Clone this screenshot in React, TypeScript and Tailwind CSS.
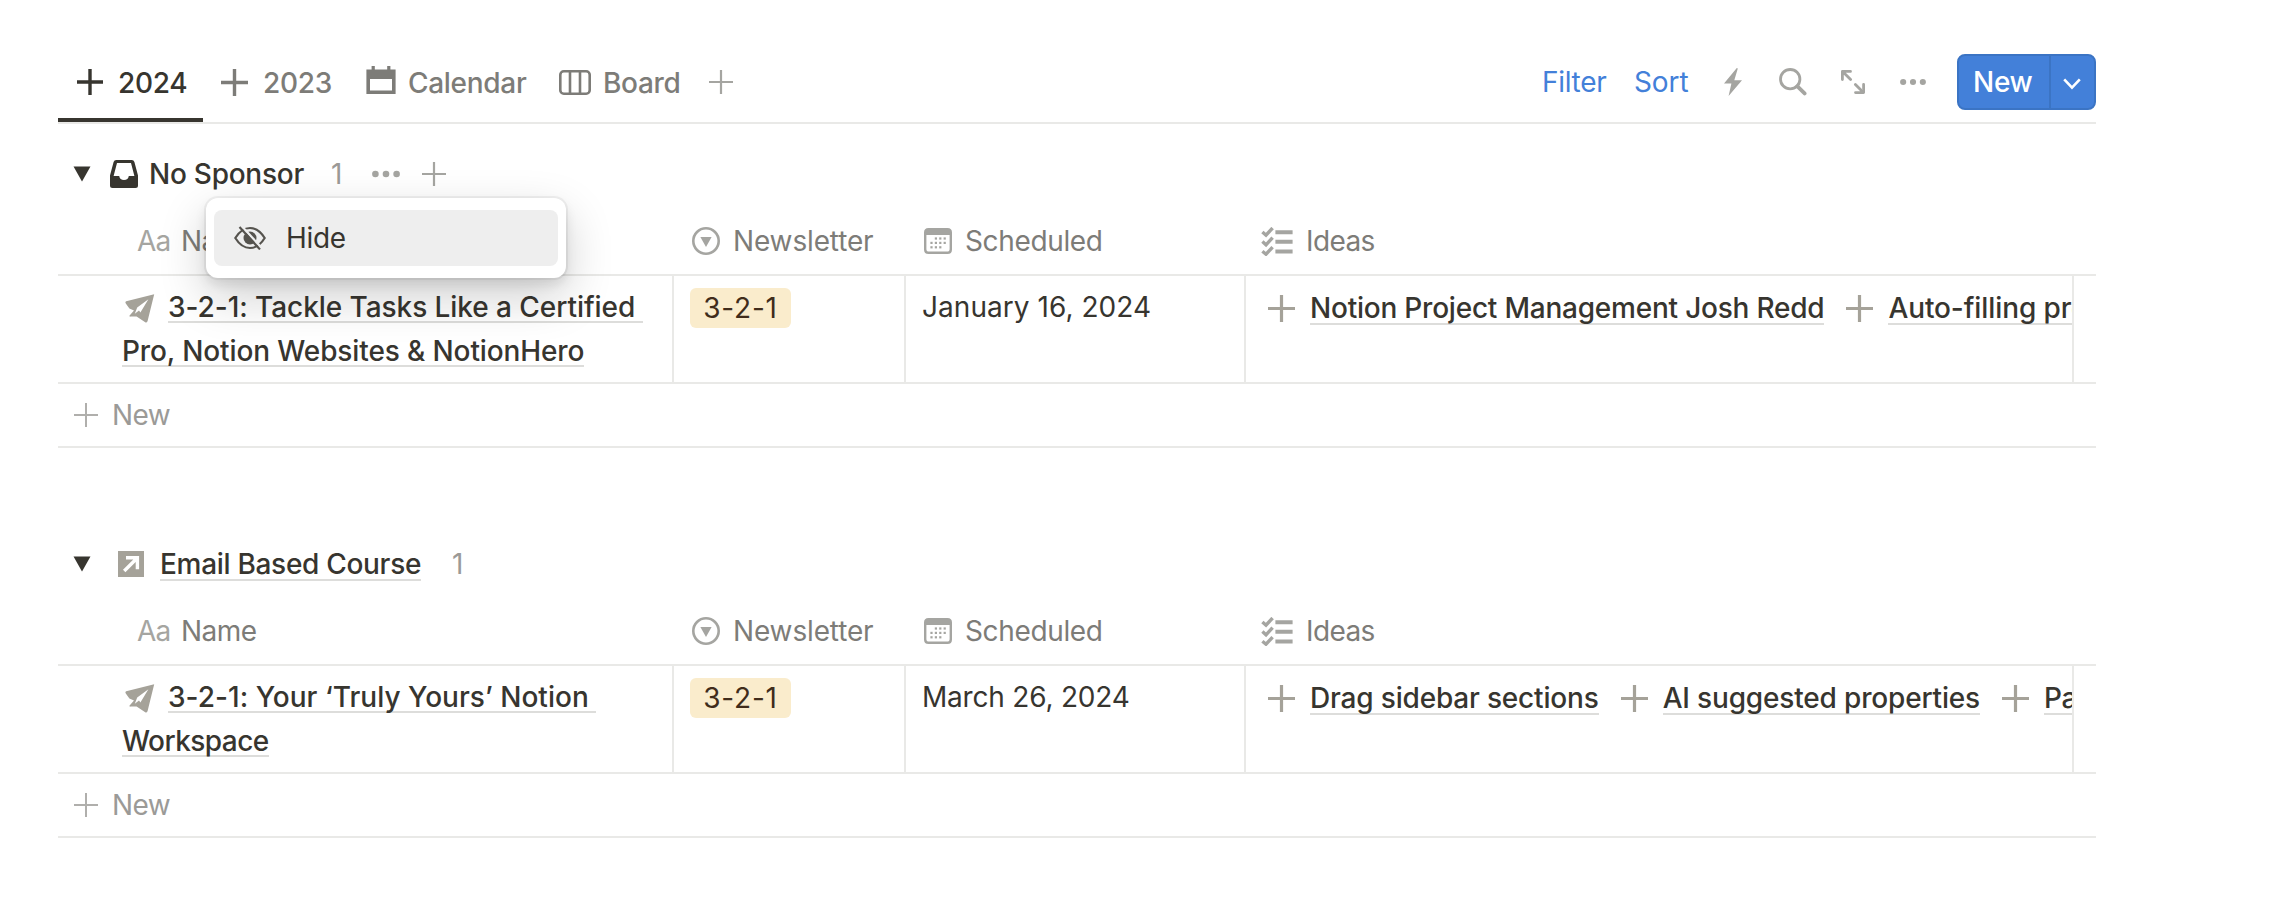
import type { ReactNode } from 'react';

interface Idea {
  title: string;
  tracking: string;
}

interface Group {
  id: string;
  heading: ReactNode;
  title: string[];
  titleTracking: string[];
  date: string;
  dateTracking: string;
  ideas: Idea[];
}

function Plus({ size, stroke, className }: { size: number; stroke: number; className?: string }) {
  return (
    <svg width={size} height={size} viewBox={`0 0 ${size} ${size}`} className={`shrink-0 ${className ?? ''}`}>
      <path
        d={`M${size / 2} 0V${size}M0 ${size / 2}H${size}`}
        stroke="currentColor"
        strokeWidth={stroke}
        fill="none"
      />
    </svg>
  );
}

function Dots({ width }: { width: number }) {
  return (
    <svg width={width} height="8" viewBox="0 0 28 8" className="shrink-0" fill="currentColor">
      <circle cx="3.4" cy="4" r="3.3" />
      <circle cx="14" cy="4" r="3.3" />
      <circle cx="24.6" cy="4" r="3.3" />
    </svg>
  );
}

function Triangle() {
  return (
    <svg width="18" height="16" viewBox="0 0 18 16" className="shrink-0" fill="#37352f">
      <path d="M0.5 0.5H17.5L9 15.5Z" />
    </svg>
  );
}

function InboxIcon() {
  return (
    <svg width="28" height="28" viewBox="0 0 28 28" className="shrink-0">
      <path
        fill="#37352f"
        fillRule="evenodd"
        d="M6.2 0H21.8Q23.8 0 24.4 2L28 15.5V25.5Q28 28 25.5 28H2.5Q0 28 0 25.5V15.5L3.6 2Q4.2 0 6.2 0ZM7 3L3.6 16H9.2Q9.8 20 14 20Q18.2 20 18.8 16H24.4L21 3Z"
      />
    </svg>
  );
}

function SendIcon() {
  return (
    <svg width="30" height="29" viewBox="0 0 30 29" className="shrink-0">
      <path
        fill="#a5a299"
        d="M29.2 0.2L1.2 7.2Q-0.2 8 0.8 9.4L4.4 14.6L9 16.6L4.4 21.8Q4.4 22.8 5.6 22.6L11.6 22.4L20.6 28.6Q22 28.8 22.6 27Z"
      />
      <path fill="#fff" d="M23.4 5.2L12.2 13.6L9.8 19.8L14 16.6L15.4 18.4Z" />
    </svg>
  );
}

function PropertyHeader() {
  return (
    <div className="flex h-[60px] items-center border-b-2 border-[#e9e9e7] pb-2 text-[28px] text-[#7d7c78]">
      <div className="flex w-[634px] items-center pl-[79px]">
        <span className="w-[44px] tracking-[-0.9px] text-[#a5a5a1]">Aa</span>
        <span className="tracking-[-0.5px]">Name</span>
      </div>
      <div className="flex w-[232px] items-center gap-[13px]">
        <svg width="28" height="28" viewBox="0 0 28 28" className="shrink-0">
          <circle cx="14" cy="14" r="12.7" fill="none" stroke="#a5a5a1" strokeWidth="2.6" />
          <path d="M8.4 10H19.6L14 20Z" fill="#a5a5a1" />
        </svg>
        <span className="tracking-[-0.15px]">Newsletter</span>
      </div>
      <div className="flex w-[337px] items-center gap-[13px]">
        <svg width="28" height="26" viewBox="0 0 28 26" className="shrink-0" fill="#a5a5a1">
          <path
            fillRule="evenodd"
            d="M4.5 0H23.5Q28 0 28 4.5V21.5Q28 26 23.5 26H4.5Q0 26 0 21.5V4.5Q0 0 4.5 0ZM2.4 7V21Q2.4 23.6 5 23.6H23Q25.6 23.6 25.6 21V7Z"
          />
          {[
            [11, 9.6], [15.4, 9.6], [19.8, 9.6],
            [6.6, 14], [11, 14], [15.4, 14], [19.8, 14],
            [6.6, 18.4], [11, 18.4], [15.4, 18.4],
          ].map(([x, y]) => (
            <rect key={`${x}-${y}`} x={x - 0.2} y={y - 0.2} width="2.2" height="2.2" />
          ))}
        </svg>
        <span className="tracking-[-0.35px]">Scheduled</span>
      </div>
      <div className="flex items-center gap-[13px]">
        <svg width="32" height="29" viewBox="0 0 32 29" className="shrink-0" fill="none" stroke="#a5a5a1">
          <path d="M14.4 5.3H31.6M14.4 14.8H31.6M14.4 24.4H31.6" strokeWidth="4" />
          <path d="M1.4 5L5 8.2L11.6 1M1.4 14.6L5 17.8L11.6 10.6M1.4 24.2L5 27.2L11.6 20.2" strokeWidth="3.4" />
        </svg>
        <span className="tracking-[-0.6px]">Ideas</span>
      </div>
    </div>
  );
}

function GroupTable({ group }: { group: Group }) {
  return (
    <section className="h-[390px]">
      <div className="flex h-[84px] items-center pl-[15px]">{group.heading}</div>
      <PropertyHeader />
      <div className="flex h-[108px] border-b-2 border-[#e9e9e7] text-[28px] text-[#37352f]">
        <div className="w-[616px] shrink-0 border-r-2 border-[#e9e9e7] pt-[13px] pl-[64px] font-medium">
          <div className="flex h-11 items-start gap-[13px] pl-[3px]">
            <span className="pt-[5px]">
              <SendIcon />
            </span>
            <span className={`h-[34px] border-b-2 border-[#dddddb] leading-[36px] whitespace-pre ${group.titleTracking[0]}`}>
              {group.title[0]}{' '}
            </span>
          </div>
          <div className="flex h-11 items-start">
            <span className={`h-[34px] border-b-2 border-[#dddddb] leading-[36px] whitespace-pre ${group.titleTracking[1]}`}>
              {group.title[1]}
            </span>
          </div>
        </div>
        <div className="w-[232px] shrink-0 border-r-2 border-[#e9e9e7] pt-3 pl-4">
          <span className="flex h-10 w-[101px] items-center justify-center rounded-md bg-[#faeccc] tracking-[0.8px] text-[#402c1b]">
            3-2-1
          </span>
        </div>
        <div className="w-[340px] shrink-0 border-r-2 border-[#e9e9e7] pt-[11px] pl-4 leading-[40px]">
          <span className={group.dateTracking}>{group.date}</span>
        </div>
        <div className="flex w-[828px] shrink-0 gap-[22px] overflow-hidden border-r-2 border-[#e9e9e7] pt-[15px] pl-[22px] font-medium">
          {group.ideas.map((idea) => (
            <div key={idea.title} className="flex h-[34px] shrink-0 items-center gap-[15px]">
              <Plus size={27} stroke={3.2} className="text-[#a5a299]" />
              <span className={`h-[34px] border-b-2 border-[#dddddb] leading-[34px] whitespace-nowrap ${idea.tracking}`}>
                {idea.title}
              </span>
            </div>
          ))}
        </div>
      </div>
      <div className="flex h-16 items-center gap-[14px] border-b-2 border-[#e9e9e7] pl-4 text-[28px] text-[#9b9a97]">
        <Plus size={24} stroke={2} className="text-[#b0afac]" />
        <span className="tracking-[-0.6px]">New</span>
      </div>
    </section>
  );
}

const groups: Group[] = [
  {
    id: 'no-sponsor',
    heading: (
      <>
        <Triangle />
        <div className="w-[19px]" />
        <InboxIcon />
        <span className="ml-[11px] w-[182px] text-[28px] font-medium tracking-[-0.25px] text-[#37352f]">No Sponsor</span>
        <span className="w-[41px] text-[28px] text-[#9b9a97]">1</span>
        <div className="flex items-center gap-[22px] text-[#a5a5a1]">
          <Dots width={28} />
          <Plus size={24} stroke={2.2} />
        </div>
      </>
    ),
    title: ['3-2-1: Tackle Tasks Like a Certified', 'Pro, Notion Websites & NotionHero'],
    titleTracking: ['tracking-[-0.06px]', 'tracking-[-0.12px]'],
    date: 'January 16, 2024',
    dateTracking: 'tracking-[0.05px]',
    ideas: [
      { title: 'Notion Project Management Josh Redd', tracking: 'tracking-[-0.22px]' },
      { title: 'Auto-filling properties', tracking: 'tracking-[-0.1px]' },
    ],
  },
  {
    id: 'email-course',
    heading: (
      <>
        <Triangle />
        <svg width="26" height="26" viewBox="0 0 26 26" className="ml-[27px] shrink-0">
          <path d="M0 0H26V26H0Z" fill="#a5a299" />
          <path d="M8 6.8H19.4V18.2M19 7.2L6.2 20" fill="none" stroke="#fff" strokeWidth="3.4" />
        </svg>
        <span className="-mt-px ml-4 h-[35px] border-b-2 border-[#dddddb] text-[28px] leading-[36px] font-medium tracking-[-0.3px] text-[#37352f]">
          Email Based Course
        </span>
        <span className="ml-[31px] text-[28px] text-[#9b9a97]">1</span>
      </>
    ),
    title: ['3-2-1: Your ‘Truly Yours’ Notion', 'Workspace'],
    titleTracking: ['tracking-[0.03px]', 'tracking-[-0.55px]'],
    date: 'March 26, 2024',
    dateTracking: 'tracking-[-0.2px]',
    ideas: [
      { title: 'Drag sidebar sections', tracking: 'tracking-[-0.18px]' },
      { title: 'AI suggested properties', tracking: 'tracking-[-0.17px]' },
      { title: 'Page previews', tracking: 'tracking-[-0.3px]' },
    ],
  },
];

function Toolbar() {
  return (
    <div className="flex h-[84px] border-b-2 border-[#e9e9e7] text-[28px] font-medium text-[#7d7c78]">
      <div className="mb-[-2px] flex h-[82px] w-[145px] items-center gap-[15px] border-b-4 border-[#37352f] pt-1.5 pl-[19px] text-[#37352f]">
        <Plus size={26} stroke={3.4} />
        <span className="mt-0.5 tracking-[-0.3px]">2024</span>
      </div>
      <div className="flex h-[84px] items-center">
        <div className="flex w-[163px] items-center gap-[15px] pl-[18px]">
          <Plus size={27} stroke={3.4} />
          <span className="mt-0.5 tracking-[-0.3px]">2023</span>
        </div>
        <div className="flex w-[193px] items-center gap-[12px]">
          <svg width="30" height="28" viewBox="0 0 30 28" className="mt-[-4px] shrink-0">
            <path
              fill="currentColor"
              fillRule="evenodd"
              d="M5.6 0H8.8V3.6H21.2V0H24.4V3.6H29.6V28H0.4V3.6H5.6ZM4 13V24.4H26V13Z"
            />
          </svg>
          <span className="mt-0.5 tracking-[-0.3px]">Calendar</span>
        </div>
        <div className="flex w-[150px] items-center gap-[12px]">
          <svg width="32" height="25" viewBox="0 0 32 25" className="shrink-0" fill="none" stroke="currentColor" strokeWidth="2.6">
            <rect x="1.3" y="1.3" width="29.4" height="22.4" rx="3.5" />
            <path d="M11 1V24M21 1V24" />
          </svg>
          <span className="mt-0.5 tracking-[-0.3px]">Board</span>
        </div>
        <Plus size={24} stroke={2.2} className="text-[#a5a5a1]" />
      </div>
      <div className="ml-auto flex h-[84px] items-center text-[#a5a5a1]">
        <span className="w-[92px] font-normal tracking-[-0.3px] text-[#4380d9]">Filter</span>
        <span className="w-[90px] font-normal tracking-[-0.1px] text-[#4380d9]">Sort</span>
        <svg width="18" height="28" viewBox="0 0 18 28" className="shrink-0" fill="currentColor">
          <path d="M12.8 0L0 15.4H7.4L4.6 28L18 12.2H10.3L13.8 0.4Z" />
        </svg>
        <svg width="28" height="28" viewBox="0 0 28 28" className="ml-[37px] shrink-0" fill="none" stroke="currentColor">
          <circle cx="11.2" cy="11.2" r="9.7" strokeWidth="2.8" />
          <path d="M18.2 18.2L25.6 25.4" strokeWidth="3.8" strokeLinecap="round" />
        </svg>
        <svg width="24" height="24" viewBox="0 0 24 24" className="ml-[34px] shrink-0" fill="none" stroke="currentColor" strokeWidth="2.8" strokeLinecap="round" strokeLinejoin="round">
          <path d="M1.4 9.5V1.4H9.5M1.8 1.8L9.6 9.6M22.6 14.5V22.6H14.5M22.2 22.2L14.4 14.4" />
        </svg>
        <div className="ml-[35px]">
          <Dots width={26} />
        </div>
        <button className="ml-[31px] flex h-14 w-[139px] items-center rounded-lg border-2 border-[#3b74c4] bg-[#4380d9] text-white">
          <span className="w-[90px] pl-[14px] text-left tracking-[-0.3px]">New</span>
          <span className="flex h-[52px] flex-1 items-center justify-center border-l-2 border-[#3b74c4] pt-[3px] pr-px">
            <svg width="18" height="12" viewBox="0 0 18 12" fill="none" stroke="currentColor" strokeWidth="2.6">
              <path d="M1.2 1.4L9 9.6L16.8 1.4" />
            </svg>
          </span>
        </button>
      </div>
    </div>
  );
}

function GroupMenu() {
  return (
    <div className="absolute top-[198px] left-[206px] h-20 w-[360px] rounded-xl bg-white px-2 py-3 shadow-[0_0_0_2px_rgba(15,15,15,0.05),0_6px_12px_rgba(15,15,15,0.1),0_18px_48px_rgba(15,15,15,0.2)]">
      <div className="flex h-14 w-[344px] items-center gap-5 rounded-lg bg-[#eeeeee] pl-5 text-[28px] text-[#37352f]">
        <svg width="32" height="24" viewBox="0 0 32 24" className="shrink-0" fill="none" stroke="#55534e" strokeWidth="2.2">
          <path d="M1.3 12Q7.5 2 16 2T30.7 12Q24.5 22 16 22T1.3 12Z" />
          <circle cx="16" cy="12" r="6.5" fill="#55534e" stroke="none" />
          <path d="M7.5 0L28 22.4" stroke="#eeeeee" strokeWidth="2.4" />
          <path d="M5.5 1L26 23.4" />
        </svg>
        <span className="tracking-[-0.3px]">Hide</span>
      </div>
    </div>
  );
}

export default function App() {
  return (
    <div className="relative h-[900px] w-[2288px] overflow-hidden bg-white font-['Inter',sans-serif]">
      <div className="w-[2096px] pt-10 pl-[58px]">
        <Toolbar />
        <div className="pt-2">
          {groups.map((group) => (
            <GroupTable key={group.id} group={group} />
          ))}
        </div>
      </div>
      <GroupMenu />
    </div>
  );
}
